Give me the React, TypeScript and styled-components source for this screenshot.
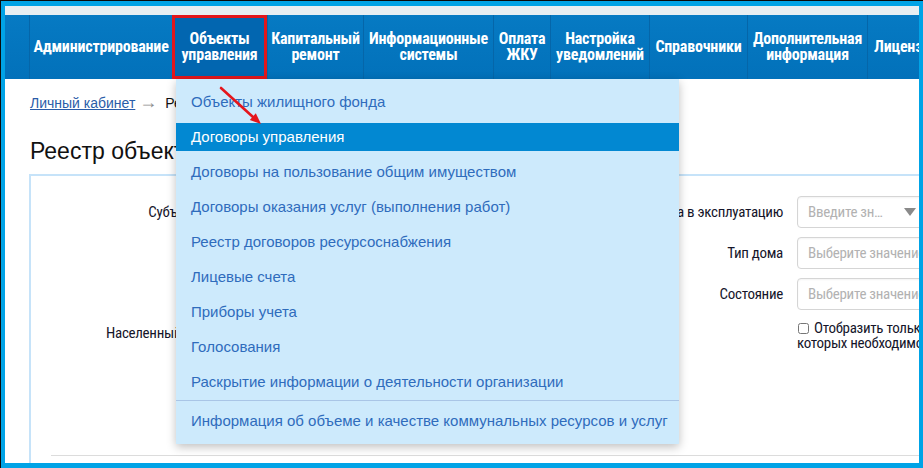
import styled, { createGlobalStyle } from 'styled-components';

const GlobalStyle = createGlobalStyle`
  html, body {
    margin: 0;
    padding: 0;
    background: #fff;
  }
  body {
    font-family: 'Liberation Sans', Arial, sans-serif;
  }
`;

const NARROW = `Roboto, 'Liberation Sans', sans-serif`;

type TNavItem = {
  lines: string[];
  w?: number;
  active?: boolean;
};

const NAV: TNavItem[] = [
  { lines: ['Администрирование'], w: 143 },
  { lines: ['Объекты', 'управления'], w: 95, active: true },
  { lines: ['Капитальный', 'ремонт'], w: 96 },
  { lines: ['Информационные', 'системы'], w: 130 },
  { lines: ['Оплата', 'ЖКУ'], w: 57 },
  { lines: ['Настройка', 'уведомлений'], w: 99 },
  { lines: ['Справочники'], w: 98 },
  { lines: ['Дополнительная', 'информация'], w: 120 },
  { lines: ['Лицензирование'] },
];

const MENU = [
  'Объекты жилищного фонда',
  'Договоры управления',
  'Договоры на пользование общим имуществом',
  'Договоры оказания услуг (выполнения работ)',
  'Реестр договоров ресурсоснабжения',
  'Лицевые счета',
  'Приборы учета',
  'Голосования',
  'Раскрытие информации о деятельности организации',
];

function DropdownMenu() {
  return (
    <Menu>
      {MENU.map((item, i) => (
        <MenuItem key={item} $active={i === 1}>
          {item}
        </MenuItem>
      ))}
      <MenuSeparator />
      <MenuItem>Информация об объеме и качестве коммунальных ресурсов и услуг</MenuItem>
    </Menu>
  );
}

export default function App() {
  return (
    <>
      <GlobalStyle />
      <Screen>
        <Window>
          <TopStrip />
          <Nav>
            <NavSpacer />
            {NAV.map((item) => (
              <NavItem key={item.lines.join(' ')} $w={item.w} $active={item.active}>
                <span>
                  {item.lines.map((line, i) => (
                    <span key={line}>
                      {i > 0 && <br />}
                      {line}
                    </span>
                  ))}
                </span>
                {item.active && <DropdownMenu />}
              </NavItem>
            ))}
          </Nav>

          <Content>
            <Breadcrumbs>
              <CrumbLink href='#'>Личный кабинет</CrumbLink>
              <CrumbArrow>→</CrumbArrow>
              <span>Реестр объектов жилищного фонда</span>
            </Breadcrumbs>
            <Title>Реестр объектов жилищного фонда</Title>

            <Panel>
              <FormGrid>
                <FieldLabel>Субъект РФ</FieldLabel>
                <Field />
                <FieldLabel>Год ввода в эксплуатацию</FieldLabel>
                <Field>
                  <SelectText>Введите значение</SelectText>
                  <Caret />
                </Field>

                <FieldLabel>Район</FieldLabel>
                <Field />
                <FieldLabel>Тип дома</FieldLabel>
                <Field>Выберите значение</Field>

                <FieldLabel>Город</FieldLabel>
                <Field />
                <FieldLabel>Состояние</FieldLabel>
                <Field>Выберите значение</Field>

                <FieldLabel $top>Населенный пункт</FieldLabel>
                <Field />
                <CheckRow>
                  <Check type='checkbox' />
                  Отобразить только дома, для
                  <br />
                  которых необходимо разместить информацию
                </CheckRow>
              </FormGrid>
              <PanelDivider />
            </Panel>
          </Content>
        </Window>

        <Annotation viewBox='0 0 923 468' width='923' height='468'>
          <line x1='221' y1='88' x2='253' y2='117' stroke='#e5161c' strokeWidth='2.6' strokeLinecap='round' />
          <polygon points='261,124 249.8,119.9 255.8,113.3' fill='#e5161c' />
        </Annotation>
      </Screen>
    </>
  );
}

const Screen = styled.div`
  position: relative;
  width: 923px;
  height: 468px;
  box-sizing: border-box;
  background: #00a3e6;
  border-top: 1px solid #0b0b0b;
  border-left: 1px solid #0b0b0b;
  padding: 5px 4px 5px 4px;
`;

const Window = styled.div`
  width: 914px;
  height: 457px;
  background: #fff;
  overflow: hidden;
  display: flex;
  flex-direction: column;
`;

const TopStrip = styled.div`
  height: 9px;
  flex: none;
  background: #e7eef2;
`;

const Nav = styled.nav`
  height: 64px;
  flex: none;
  display: flex;
  background: linear-gradient(#067ac3, #0271ba);
`;

const NavSpacer = styled.div`
  width: 24px;
  flex: none;
`;

const NavItem = styled.div<{ $w?: number; $active?: boolean }>`
  position: relative;
  flex: none;
  box-sizing: border-box;
  width: ${(p) => (p.$w ? `${p.$w}px` : 'auto')};
  padding: 0 6px;
  display: flex;
  align-items: center;
  justify-content: center;
  text-align: center;
  white-space: nowrap;
  color: #fff;
  font-family: ${NARROW};
  font-stretch: 80%;
  font-weight: 700;
  font-size: 16px;
  letter-spacing: -0.2px;
  line-height: 16px;
  border-left: 1px solid #0566a9;
  ${(p) =>
    p.$active &&
    `
    background: #0266b0;
    border: 3px solid #e3161b;
  `}
`;

const Menu = styled.div`
  position: absolute;
  top: calc(100% + 3px);
  left: 1px;
  z-index: 5;
  width: 503px;
  box-sizing: border-box;
  padding: 9px 0;
  background: #cdeafc;
  box-shadow: 0 3px 9px rgba(0, 0, 0, 0.25);
  text-align: left;
  display: flex;
  flex-direction: column;
  letter-spacing: 0;
`;

const MenuItem = styled.div<{ $active?: boolean }>`
  height: 28px;
  display: flex;
  align-items: center;
  padding-left: 15px;
  font-family: 'Liberation Sans', Arial, sans-serif;
  font-stretch: normal;
  font-weight: 400;
  font-size: 15px;
  color: ${(p) => (p.$active ? '#fff' : '#2f6cbc')};
  background: ${(p) => (p.$active ? '#0288d2' : 'transparent')};

  & + & {
    margin-top: 7px;
  }
`;

const MenuSeparator = styled.div`
  height: 1px;
  margin: 4px 0 6px;
  background: #a9c5e6;
`;

const Content = styled.div`
  flex: 1;
  display: flex;
  flex-direction: column;
  padding-left: 24px;
`;

const Breadcrumbs = styled.div`
  margin-top: 13px;
  padding-left: 1px;
  line-height: 20px;
  font-size: 14px;
  color: #111;
  white-space: nowrap;
`;

const CrumbLink = styled.a`
  color: #2a5ca8;
  text-decoration: underline;
`;

const CrumbArrow = styled.span`
  color: #8c8c8c;
  font-size: 18px;
  margin: 0 8px 0 4px;
`;

const Title = styled.h1`
  margin: 24px 0 0;
  padding-left: 1px;
  font-size: 23px;
  line-height: 28px;
  font-weight: 400;
  color: #111;
  white-space: nowrap;
`;

const Panel = styled.div`
  margin-top: 9px;
  flex: 1;
  width: 1000px;
  border-top: 2px solid #c6e3f9;
  border-left: 2px solid #c6e3f9;
  padding-top: 20px;
`;

const FormGrid = styled.div`
  display: grid;
  grid-template-columns: 187px 330px 207px 130px;
  grid-auto-rows: 32px;
  column-gap: 14px;
  row-gap: 9px;
  align-content: start;
  height: 259px;
`;

const FieldLabel = styled.div<{ $top?: boolean }>`
  display: flex;
  align-items: ${(p) => (p.$top ? 'flex-start' : 'center')};
  padding-top: ${(p) => (p.$top ? '5px' : '0')};
  justify-content: flex-end;
  white-space: nowrap;
  font-family: ${NARROW};
  font-stretch: 80%;
  font-size: 15px;
  letter-spacing: -0.3px;
  color: #15152a;
`;

const Field = styled.div`
  box-sizing: border-box;
  display: flex;
  align-items: center;
  padding: 0 10px;
  border: 1px solid #d5d5d5;
  border-radius: 4px;
  box-shadow: inset 0 1px 2px rgba(0, 0, 0, 0.05);
  background: #fff;
  overflow: hidden;
  white-space: nowrap;
  font-family: ${NARROW};
  font-stretch: 80%;
  font-size: 15px;
  letter-spacing: -0.3px;
  color: #b2b2b2;
`;

const SelectText = styled.span`
  max-width: 80px;
  overflow: hidden;
  text-overflow: ellipsis;
`;

const Caret = styled.span`
  margin-left: auto;
  width: 0;
  height: 0;
  border-left: 6px solid transparent;
  border-right: 6px solid transparent;
  border-top: 8px solid #8a8a8a;
`;

const CheckRow = styled.label`
  grid-column: 4;
  padding-top: 2px;
  white-space: nowrap;
  font-family: ${NARROW};
  font-stretch: 80%;
  font-size: 15px;
  letter-spacing: -0.3px;
  line-height: 15px;
  color: #15152a;
`;

const Check = styled.input`
  width: 11px;
  height: 11px;
  margin: 0 5px 0 1px;
  vertical-align: -1px;
`;

const PanelDivider = styled.div`
  height: 1px;
  margin-left: 20px;
  background: #dcdcdc;
`;

const Annotation = styled.svg`
  position: absolute;
  top: -1px;
  left: -1px;
  z-index: 10;
  pointer-events: none;
`;
